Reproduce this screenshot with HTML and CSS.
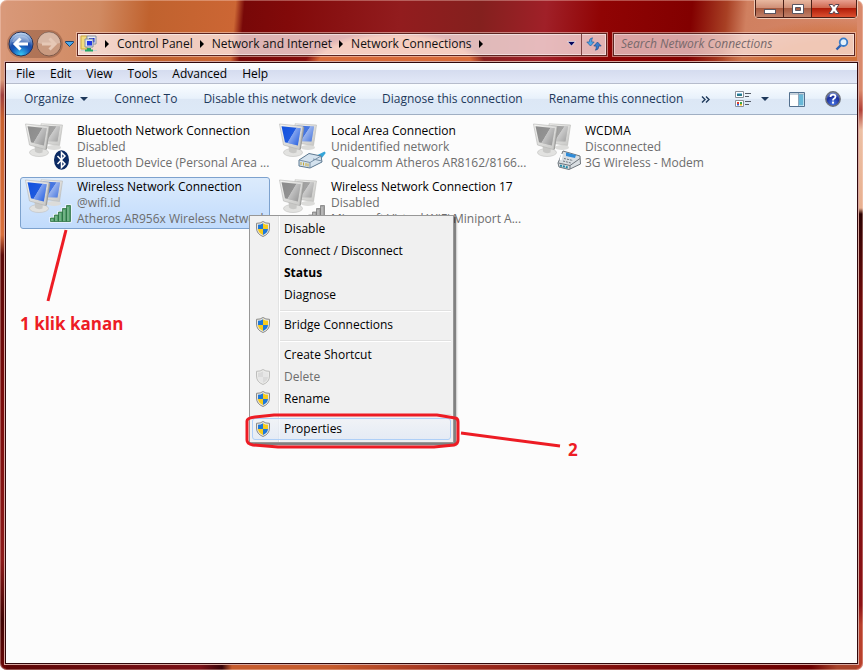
FILE: index.html
```html
<!DOCTYPE html>
<html lang="en">
  <head>
    <meta charset="UTF-8" />
    <meta name="viewport" content="width=device-width, initial-scale=1.0" />
    <title>Network Connections</title>
    <link rel="stylesheet" href="styles.css" />
  </head>
  <body>
    <!-- Shared icons -->
    <svg class="sprite" aria-hidden="true">
      <defs>
        <linearGradient id="glare" x1="0" y1="0.2" x2="1" y2="0.8">
          <stop offset="0" stop-color="#fff" stop-opacity="0.05" />
          <stop offset="0.5" stop-color="#fff" stop-opacity="0.1" />
          <stop offset="0.53" stop-color="#fff" stop-opacity="0.5" />
          <stop offset="1" stop-color="#fff" stop-opacity="0.15" />
        </linearGradient>
        <linearGradient id="bezel" x1="0" y1="0" x2="1" y2="1">
          <stop offset="0" stop-color="#f6f6f4" />
          <stop offset="1" stop-color="#c6c6c4" />
        </linearGradient>
        <radialGradient id="ball" cx="0.5" cy="0.95" r="0.9">
          <stop offset="0" stop-color="#35c8f5" />
          <stop offset="0.45" stop-color="#1556b8" />
          <stop offset="0.6" stop-color="#1b4da8" />
          <stop offset="1" stop-color="#b9d2f0" />
        </radialGradient>
        <radialGradient id="help-ball" cx="0.5" cy="0.8" r="0.8">
          <stop offset="0" stop-color="#4a78e6" />
          <stop offset="0.6" stop-color="#1c2f9c" />
          <stop offset="1" stop-color="#8fa4dc" />
        </radialGradient>
      </defs>
      <symbol id="pc" viewBox="0 0 48 48">
        <ellipse cx="29" cy="24.500" rx="7" ry="2.500" fill="#dcdcda" />
        <path d="M16 .8 37.500 2 34.500 22.500 18 20z" fill="url(#bezel)" stroke="#b8b8b6" stroke-width=".6" />
        <path d="M17.500 2.500 35 3.500 32.500 18.500 18 18z" fill="currentColor" opacity=".8" />
        <path d="M17.500 2.500 35 3.500 32.500 18.500 18 18z" fill="url(#glare)" />
        <ellipse cx="14" cy="29.500" rx="9.500" ry="4" fill="#e2e2e0" stroke="#c0c0be" stroke-width=".6" />
        <path d="M9.500 22 18 24 17.500 29.500Q13 31.500 10 28.500z" fill="#c8c8c6" />
        <path d="M23.500 3.500 25.300 4.200 21.800 26.500 20 26.500z" fill="#9c9c9a" />
        <path d="M.5 1 24 3.300 20.500 26.500 4.500 22z" fill="url(#bezel)" stroke="#b4b4b2" stroke-width=".6" />
        <path d="M2.500 3.200 21.700 5.200 18.800 22.500 6 19.300z" fill="currentColor" />
        <path d="M2.500 3.200 21.700 5.200 18.800 22.500 6 19.300z" fill="url(#glare)" />
      </symbol>
      <symbol id="bars" viewBox="0 0 48 48">
        <path d="M25.500 39h4v3.500h-4zM29.500 36h4v6.500h-4zM33.500 33h4v9.500h-4zM37.500 29.500h4v13h-4zM41.500 26.500h4v16h-4z" fill="currentColor" stroke="#fff" stroke-width="2" />
        <path d="M25.500 39h4v3.500h-4zM29.500 36h4v6.500h-4zM33.500 33h4v9.500h-4zM37.500 29.500h4v13h-4zM41.500 26.500h4v16h-4z" fill="currentColor" stroke="var(--edge, #808080)" stroke-width=".8" />
        <path d="M27 40v2M31 37v5M35 34v8M39 31v11M43 28v14" stroke="#fff" stroke-opacity=".4" />
      </symbol>
      <symbol id="shield" viewBox="0 0 14 16">
        <path d="M7 .5Q9.500 2.500 13.500 2.300V7Q13.500 13 7 15.500.5 13 .5 7V2.300Q4.500 2.500 7 .5z" fill="#e8e8e4" stroke="#8b8b88" />
        <path d="M7 2.300V8H2V3.800Q5 3.800 7 2.300z" fill="var(--cool, #1f78d8)" />
        <path d="M7 2.300V8h5V3.800Q9 3.800 7 2.300z" fill="var(--warm, #f8cc1c)" />
        <path d="M7 8v6Q2.200 11.800 2 8z" fill="var(--warm, #f8cc1c)" />
        <path d="M7 8v6Q11.800 11.800 12 8z" fill="var(--cool, #1f78d8)" />
      </symbol>
    </svg>

    <div class="window">
      <header class="titlebar">
        <div class="caption">
          <button class="caption__btn" aria-label="Minimize">
            <svg width="14" height="12"><rect x="1.500" y="6.500" width="11" height="4" fill="#fff" stroke="#5a5560" /></svg>
          </button>
          <button class="caption__btn" aria-label="Maximize">
            <svg width="14" height="12"><path d="M1.500 1.500h11v9h-11zM4.500 4.500v3h5v-3z" fill="#fff" fill-rule="evenodd" stroke="#5a5560" /></svg>
          </button>
          <button class="caption__btn caption__btn--close" aria-label="Close">
            <svg width="14" height="12"><path d="M2 1.500h3.500L7 3.500l1.500-2H12L9 6l3 4.500H8.500L7 8.500l-1.500 2H2L5 6z" fill="#fff" stroke="#5a4550" /></svg>
          </button>
        </div>

        <div class="nav">
          <div class="nav__history">
            <button class="nav__btn" aria-label="Back">
              <svg width="26" height="26" viewBox="0 0 26 26">
                <circle cx="13" cy="13" r="12" fill="url(#ball)" stroke="#26345c" />
                <path d="M4 11A9.500 9.500 0 0 1 22 11Q13 14 4 11z" fill="#fff" opacity=".3" />
                <path d="M20 13H7M12.500 7.500 7 13l5.500 5.500" fill="none" stroke="#fff" stroke-width="3" />
              </svg>
            </button>
            <button class="nav__btn" aria-label="Forward">
              <svg width="26" height="26" viewBox="0 0 26 26">
                <circle cx="13" cy="13" r="12" fill="#c99a80" stroke="#7d5a4a" />
                <path d="M2 12A11 11 0 0 1 24 12Q13 15 2 12z" fill="#fff" opacity=".3" />
                <path d="M6 13H19M13.500 7.500 19 13l-5.500 5.500" fill="none" stroke="#e6c8b6" stroke-width="3" />
              </svg>
            </button>
          </div>
          <button class="nav__recent" aria-label="Recent pages">
            <svg width="9" height="6"><path d="M.5.5h8v1L4.500 5.500.5 1.500z" fill="#4aa8e8" stroke="#1d4470" /></svg>
          </button>

          <nav class="address" aria-label="Address">
            <svg class="address__icon" width="18" height="18" viewBox="0 0 18 18">
              <path d="M1 1h6v13H1z" fill="#f3dc7c" stroke="#c9a845" />
              <path d="M7 1h9v8H7z" fill="#e8ecf4" stroke="#8891a0" />
              <path d="M9 3h5.500v4.500H9z" fill="#1a2fd0" />
              <path d="M5 4h8v8H5z" fill="#dfe4ee" stroke="#8891a0" />
              <path d="M7 6h5v4.500H7z" fill="#2238e0" />
              <path d="M1 15.500h16" stroke="#c8d4d4" />
              <path d="M7 13h4v1.500h2v2H5v-2h2z" fill="#22a565" />
            </svg>
            <span class="arrow"></span>
            <a class="address__link" href="#">Control Panel</a>
            <span class="arrow"></span>
            <a class="address__link" href="#">Network and Internet</a>
            <span class="arrow"></span>
            <a class="address__link" href="#">Network Connections</a>
            <span class="arrow"></span>
            <button class="address__drop" aria-label="Previous locations">
              <svg width="9" height="6"><path d="M.5.5h8L4.500 5z" fill="#06065c" stroke="#fff" stroke-width=".6" /></svg>
            </button>
            <button class="address__refresh" aria-label="Refresh">
              <svg width="16" height="14" viewBox="0 0 16 14">
                <path d="M6.500.8Q3.200 1 3.200 5H.8l3.700 4 3.700-4H5.800Q5.500 2.500 6.500.8z" fill="#4fa6e6" stroke="#2a5f9c" stroke-width=".7" />
                <path d="M9.500 13.200q3.300-.2 3.300-4.200h2.400l-3.700-4-3.700 4h2.400q.3 2.500-.7 4.200z" fill="#3a7ccc" stroke="#234d8c" stroke-width=".7" />
              </svg>
            </button>
          </nav>

          <form class="search">
            <input class="search__input" type="search" aria-label="Search" placeholder="Search Network Connections" />
            <svg width="14" height="14" viewBox="0 0 14 14">
              <path d="M1.500 12.500 6 8" stroke="#2a62b4" stroke-width="2.400" />
              <circle cx="8.500" cy="5.200" r="3.800" fill="#e4f1fa" stroke="#3a7cc8" stroke-width="1.800" />
            </svg>
          </form>
        </div>
      </header>

      <main class="client">
        <div class="menubar">
          <button class="menubar__item">File</button>
          <button class="menubar__item">Edit</button>
          <button class="menubar__item">View</button>
          <button class="menubar__item">Tools</button>
          <button class="menubar__item">Advanced</button>
          <button class="menubar__item">Help</button>
        </div>

        <div class="toolbar">
          <button class="toolbar__btn">Organize <span class="caret"></span></button>
          <button class="toolbar__btn">Connect To</button>
          <button class="toolbar__btn">Disable this network device</button>
          <button class="toolbar__btn">Diagnose this connection</button>
          <button class="toolbar__btn">Rename this connection</button>
          <button class="toolbar__more" aria-label="More commands">
            <svg width="9" height="7"><path d="M1 .5 4 3.500 1 6.500M5 .5 8 3.500 5 6.500" fill="none" stroke="#1e395b" stroke-width="1.400" /></svg>
          </button>
          <div class="toolbar__right">
            <button class="toolbar__icon" aria-label="Change your view">
              <svg width="17" height="16" viewBox="0 0 17 16">
                <path d="M.5.5h8v6h-8zM.5 9.500h8v6h-8z" fill="#fff" stroke="#8a9099" />
                <path d="M2 2h5v1H2z" fill="#8cc4e8" />
                <path d="M2 3h5v2H2z" fill="#2a7a8c" />
                <path d="M2 11h2v2H2z" fill="#e03c2c" />
                <path d="M5 11h2v2H5z" fill="#3aa648" />
                <path d="M2 13h2v1.500H2z" fill="#2c62d8" />
                <path d="M5 13h2v1.500H5z" fill="#eab41c" />
                <path d="M10 2.500h6M10 5.500h4M10 10.500h6M10 13.500h4" stroke="#555c68" />
              </svg>
              <span class="caret"></span>
            </button>
            <button class="toolbar__icon" aria-label="Show the preview pane">
              <svg width="16" height="15" viewBox="0 0 16 15">
                <path d="M.5.5h15v14H.5z" fill="#fff" stroke="#53708e" />
                <path d="M10 2h4.500v11.500H10z" fill="#68b8d8" />
                <path d="M1 2h14M9.500 1v13" stroke="#8fa6ba" />
              </svg>
            </button>
            <button class="toolbar__icon" aria-label="Get help">
              <svg width="16" height="16" viewBox="0 0 16 16">
                <circle cx="8" cy="8" r="7.200" fill="url(#help-ball)" stroke="#6c7078" stroke-width="1.400" />
                <path d="M5.500 6Q5.500 3.600 8 3.600T10.500 5.800Q10.500 7 8.900 7.800 8 8.300 8 9.500" fill="none" stroke="#fff" stroke-width="1.800" />
                <rect x="7" y="10.600" width="2" height="2" fill="#fff" />
              </svg>
            </button>
          </div>
        </div>

        <div class="content">
          <div class="connections">
            <button class="tile">
              <svg class="tile__icon" viewBox="0 0 48 48">
                <use href="#pc" />
                <ellipse cx="36.500" cy="37" rx="7.500" ry="9.800" fill="#0b2a63" />
                <path d="M32.500 33 40 41l-3.500 3.500v-15L40 33l-7.500 8" fill="none" stroke="#fff" stroke-width="1.500" />
              </svg>
              <span class="tile__text">
                <span class="tile__name">Bluetooth Network Connection</span>
                <span class="tile__row">Disabled</span>
                <span class="tile__row">Bluetooth Device (Personal Area ...</span>
              </span>
            </button>
            <button class="tile">
              <svg class="tile__icon tile__icon--on" viewBox="0 0 48 48">
                <use href="#pc" />
                <path d="M37 34 46 29.500 42 34.500z" fill="#35a5d8" stroke="#35a5d8" stroke-width="2" />
                <path d="M20 37 30 30.500 42 33 43 39 31 45 20 43z" fill="#d4e2ee" stroke="#5c7890" />
                <path d="M20 37 31 39.500 42 33M31 39.500V45M34 36 43 38" fill="none" stroke="#7890a6" />
                <path d="M22 39v3M24.500 39.500v3M27 40v3M29 40.500v3" stroke="#c6a838" />
              </svg>
              <span class="tile__text">
                <span class="tile__name">Local Area Connection</span>
                <span class="tile__row">Unidentified network</span>
                <span class="tile__row">Qualcomm Atheros AR8162/8166...</span>
              </span>
            </button>
            <button class="tile">
              <svg class="tile__icon" viewBox="0 0 48 48">
                <use href="#pc" />
                <path d="M25 40 30 28 47 33 47.500 41 36 46.500 26 44z" fill="#d9dee2" stroke="#6d757c" />
                <path d="M25.500 40 37 42.500 47 35.500M37 42.500V46" fill="none" stroke="#6d757c" />
                <path d="M33 29.500 43 32 42 35 33 33z" fill="#2f8bd8" />
                <path d="M29 31 27.500 37" stroke="#fff" stroke-width="2" />
                <path d="M31 35.500 40 37.500M30 38 38 40" stroke="#707880" stroke-dasharray="2 1" />
                <path d="M27 42.500 35 44.500" stroke="#258aa8" stroke-width="2" stroke-dasharray="2 1" />
              </svg>
              <span class="tile__text">
                <span class="tile__name">WCDMA</span>
                <span class="tile__row">Disconnected</span>
                <span class="tile__row">3G Wireless - Modem</span>
              </span>
            </button>
            <button class="tile tile--selected">
              <svg class="tile__icon tile__icon--on" viewBox="0 0 48 48">
                <use href="#pc" />
                <use class="signal signal--on" href="#bars" />
              </svg>
              <span class="tile__text">
                <span class="tile__name">Wireless Network Connection</span>
                <span class="tile__row">@wifi.id</span>
                <span class="tile__row">Atheros AR956x Wireless Network...</span>
              </span>
            </button>
            <button class="tile">
              <svg class="tile__icon" viewBox="0 0 48 48">
                <use href="#pc" />
                <use class="signal" href="#bars" />
              </svg>
              <span class="tile__text">
                <span class="tile__name">Wireless Network Connection 17</span>
                <span class="tile__row">Disabled</span>
                <span class="tile__row">Microsoft Virtual WiFi Miniport A...</span>
              </span>
            </button>
          </div>

          <div class="menu">
            <button class="menu__item"><svg class="menu__icon"><use href="#shield" /></svg>Disable</button>
            <button class="menu__item">Connect / Disconnect</button>
            <button class="menu__item menu__item--default">Status</button>
            <button class="menu__item">Diagnose</button>
            <hr class="menu__line" />
            <button class="menu__item"><svg class="menu__icon"><use href="#shield" /></svg>Bridge Connections</button>
            <hr class="menu__line" />
            <button class="menu__item">Create Shortcut</button>
            <button class="menu__item" disabled><svg class="menu__icon"><use href="#shield" /></svg>Delete</button>
            <button class="menu__item"><svg class="menu__icon"><use href="#shield" /></svg>Rename</button>
            <hr class="menu__line" />
            <button class="menu__item menu__item--hover"><svg class="menu__icon"><use href="#shield" /></svg>Properties</button>
          </div>

          <!-- Step marks -->
          <svg class="marks" width="600" height="400" aria-hidden="true">
            <path d="M60 115 42 186" />
            <path d="M241 306Q241 303 249 302L268 300H431L449 303Q452 303 452 307V325Q452 329 448 330L428 332H272L247 330Q241 329 241 325z" />
            <path d="M455 318 554 331" />
          </svg>
          <p class="note note--one">1 klik kanan</p>
          <p class="note note--two">2</p>
        </div>
      </main>
    </div>
  </body>
</html>
```
FILE: styles.css
```css
* {
  margin: 0;
  padding: 0;
  box-sizing: border-box;
}

body {
  font-family: "Open Sans", "Noto Sans", sans-serif;
  font-size: 12px;
  line-height: 16px;
  color: #000;
}

button,
input {
  font: inherit;
  color: inherit;
  background: none;
  border: none;
}

svg {
  display: block;
  flex-shrink: 0;
}

.sprite {
  position: absolute;
  width: 0;
  height: 0;
}

/* Window frame */
.window {
  display: flex;
  flex-direction: column;
  min-height: 100vh;
  padding: 0 5px 6px;
  border-radius: 7px;
  box-shadow: inset 0 0 0 1px rgba(255, 220, 210, 0.35);
  background:
    linear-gradient(#d9997a 80px, #a04040 95px, #c8602e 118px, #d9703c 235px, #5c0a0a 255px, #7a0c0c 400px, #8c1a1a 560px, #400404 620px, #6c0808) left / 6px 100% no-repeat,
    linear-gradient(#d98a6c 90px, #b04038 110px, #ecc0a4 130px, #e8b090 208px, #2c0202 214px, #6c0a0a 300px, #8c1216 605px, #b8402c 625px) right / 6px 100% no-repeat,
    linear-gradient(90deg, #5c0606, #7c1218 200px, #380408 222px, #c65c2e 232px, #c65c2e 38%, #a03020 52%, #7a0808 75%, #6c0000 94%, #a8442c 97%) bottom / 100% 7px no-repeat,
    radial-gradient(ellipse 90px 32px at 395px 64px, #d86a38 85%, transparent) 0 0 / 100% 64px no-repeat,
    radial-gradient(ellipse 120px 44px at 835px 64px, #d07038 50%, transparent) 0 0 / 100% 64px no-repeat,
    linear-gradient(95deg, #d9997a, #d08a62 100px, #c0622e 150px, #cc6634 235px, #780808 244px, #820a0a 290px, #921c1e 400px, #84201e 480px, #a02028 545px, #900404 600px, #820000 690px, #a84024 725px, #d08060 745px, #d98a6c);
}

.caption {
  display: flex;
  width: 104px;
  height: 19px;
  margin-left: auto;
  border: 1px solid #f0c8b4;
  border-top: none;
  border-radius: 0 0 5px 5px;
  overflow: hidden;
}

.caption__btn {
  display: flex;
  align-items: center;
  justify-content: center;
  width: 28px;
  border: 1px solid #4a2018;
  border-top: none;
  border-right: none;
  background: linear-gradient(#e8b8a0, #d09078 45%, #a85a40 50%, #c08068);
}

.caption__btn--close {
  flex: 1;
  border-right: 1px solid #4a2018;
  background: linear-gradient(#e8a090, #d06850 45%, #b01c08 50%, #dc5030);
}

.nav {
  display: flex;
  align-items: center;
  height: 36px;
  margin-top: 7px;
  padding-left: 2px;
}

.nav__history {
  display: flex;
  gap: 2px;
  padding: 1px;
  border-radius: 14px;
  background-color: rgba(120, 70, 50, 0.4);
}

.nav__recent {
  padding: 2px;
}

.address {
  display: flex;
  align-items: center;
  flex: 1 1 530px;
  height: 23px;
  margin-left: 1px;
  padding-left: 2px;
  border: 1px solid #5c2420;
  box-shadow: 0 0 0 1px rgba(255, 225, 215, 0.5), inset 0 0 0 1px rgba(255, 255, 255, 0.5);
  background-color: rgba(255, 240, 240, 0.74);
}

.arrow {
  margin: 0 8px 0 7px;
  border: 4px solid transparent;
  border-left-color: #000;
  border-right: none;
}

.address__link {
  color: #111;
  text-decoration: none;
  white-space: nowrap;
}

.address__drop {
  height: 100%;
  margin-left: auto;
  padding: 0 5px;
}

.address__refresh {
  height: 100%;
  padding: 0 4px;
  border-left: 1px solid #7c4444;
}

.search {
  display: flex;
  align-items: center;
  flex: 0 1 242px;
  height: 23px;
  margin: 0 3px 0 6px;
  padding: 0 5px 0 7px;
  border: 1px solid #5c2420;
  box-shadow: 0 0 0 1px rgba(255, 225, 215, 0.5), inset 0 0 0 1px rgba(255, 255, 255, 0.4);
  background-color: rgba(255, 240, 240, 0.68);
}

.search__input {
  flex: 1;
  min-width: 0;
  outline: none;
}

.search__input::placeholder {
  font-style: italic;
  color: #77696b;
  opacity: 1;
}

/* Client area */
.client {
  display: flex;
  flex-direction: column;
  flex: 1;
  border: 1px solid #30080c;
  box-shadow: 0 0 0 1px #d8a8a0;
  background-color: #fcfcfc;
}

.menubar {
  display: flex;
  gap: 1px;
  height: 21px;
  padding: 2px 0 0 3px;
  border-bottom: 1px solid #b6bccc;
  background: linear-gradient(#fff, #f4f7fc 35%, #d5dcef 36%, #e2e8f7);
}

.menubar__item {
  padding: 0 7px;
}

.toolbar {
  display: flex;
  align-items: center;
  height: 31px;
  padding: 0 11px 0 5px;
  color: #1e395b;
  border-bottom: 1px solid #a0afc3;
  background: linear-gradient(#fafdff, #e8f1fb 48%, #dce7f5 50%, #dde9f7);
}

.toolbar__btn {
  display: flex;
  align-items: center;
  gap: 6px;
  padding: 0 13px;
  white-space: nowrap;
}

.caret {
  border: 4px solid transparent;
  border-top-color: currentColor;
  border-bottom: none;
}

.toolbar__more {
  padding: 0 5px;
}

.toolbar__right {
  display: flex;
  gap: 10px;
  margin-left: auto;
}

.toolbar__icon {
  display: flex;
  align-items: center;
  gap: 9px;
  padding: 0 5px;
}

.content {
  position: relative;
  flex: 1;
  padding: 6px 14px;
}

.connections {
  display: grid;
  grid-template-columns: repeat(auto-fill, 250px);
  gap: 4px;
}

.tile {
  display: flex;
  gap: 4px;
  padding: 1px 4px;
  border: 1px solid transparent;
  border-radius: 3px;
  text-align: left;
}

.tile--selected {
  border-color: #7da2ce;
  background: linear-gradient(#dcebfc, #c1dbfc);
}

.tile__icon {
  width: 48px;
  height: 48px;
  color: #868686;
}

.tile__icon--on {
  color: #0648dc;
}

.signal {
  color: #a4a4a4;
}

.signal--on {
  color: #4f9e68;
  --edge: #2f7448;
}

.tile__text {
  min-width: 0;
}

.tile__name,
.tile__row {
  display: block;
  white-space: nowrap;
}

.tile__row {
  color: #6d6d6d;
}

/* Context menu */
.menu {
  position: absolute;
  top: 100px;
  left: 243px;
  width: 205px;
  padding: 2px;
  border: 1px solid #979797;
  box-shadow: 2px 2px 1px rgba(0, 0, 0, 0.4), 3px 3px 2px rgba(0, 0, 0, 0.15);
  background: linear-gradient(90deg, #f1f1f1 28px, #e2e3e3 28px, #e2e3e3 29px, #fff 29px, #fff 30px, #f0f0f0 30px);
}

.menu__item {
  position: relative;
  display: block;
  width: 100%;
  height: 22px;
  padding-left: 31px;
  border: 1px solid transparent;
  border-radius: 3px;
  text-align: left;
}

.menu__item--default {
  font-weight: 700;
}

.menu__item--hover {
  border-color: #aecff7;
  background: linear-gradient(rgba(240, 244, 250, 0.6), rgba(222, 232, 248, 0.6));
}

.menu__item:disabled {
  color: #6d6d6d;
  --cool: #c4c4c4;
  --warm: #dcdcdc;
}

.menu__item:disabled .menu__icon {
  opacity: 0.5;
}

.menu__icon {
  position: absolute;
  top: 2px;
  left: 3px;
  width: 14px;
  height: 16px;
}

.menu__line {
  height: 2px;
  margin: 4px 0 2px 28px;
  border: none;
  border-top: 1px solid #e0e0e0;
  border-bottom: 1px solid #fff;
}

/* Step marks */
.marks {
  position: absolute;
  top: 0;
  left: 0;
  fill: none;
  stroke: #ed1c24;
  stroke-width: 3px;
  pointer-events: none;
}

.note {
  position: absolute;
  font-size: 17px;
  font-weight: 700;
  line-height: 20px;
  color: #ed1c24;
}

.note--one {
  top: 199px;
  left: 14px;
}

.note--two {
  top: 325px;
  left: 562px;
}
```
